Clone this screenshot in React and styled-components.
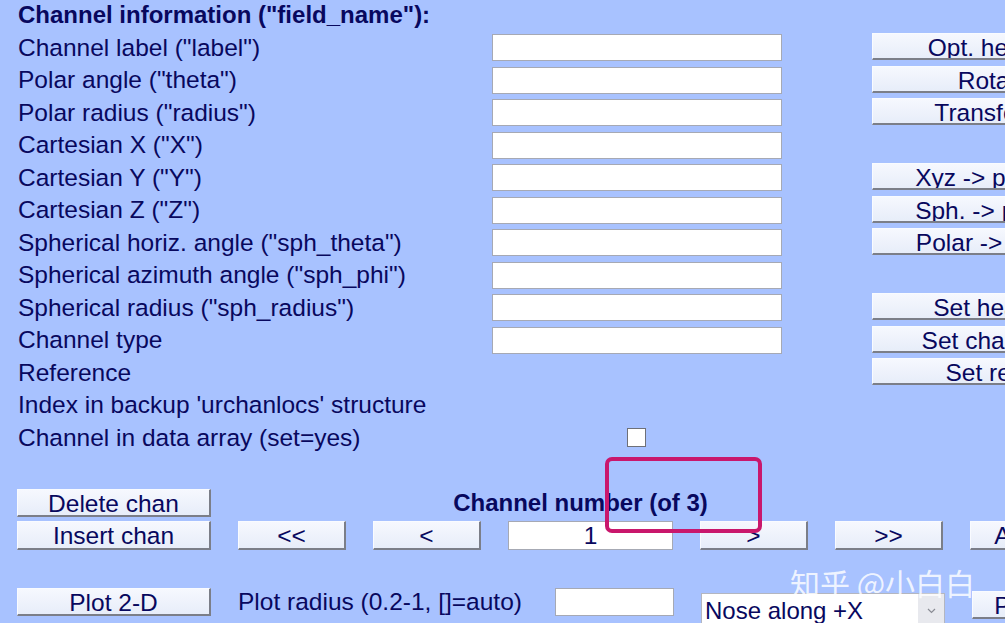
import styled, { createGlobalStyle } from "styled-components";

const GlobalStyle = createGlobalStyle`
  html, body {
    margin: 0;
    padding: 0;
    background: #a8c2ff;
    overflow: hidden;
  }
`;

const Page = styled.div`
  position: relative;
  width: 1005px;
  height: 623px;
  overflow: hidden;
  background: #a8c2ff;
  color: #08085e;
  font-family: "Liberation Sans", Arial, sans-serif;
  font-size: 24.5px;
`;

const Fields = styled.div`
  margin-top: -1px;
  padding-left: 18px;
  display: flex;
  flex-direction: column;
`;

const FieldRow = styled.div`
  display: grid;
  grid-template-columns: 474px 290px 90px 295px;
  height: 32.5px;
  align-items: center;
`;

const Label = styled.span`
  grid-column: 1;
  white-space: nowrap;
  font-weight: ${(p) => (p.$bold ? 700 : 400)};
  font-size: ${(p) => (p.$bold ? "24px" : "inherit")};
`;

const TextBox = styled.input`
  grid-column: 2;
  box-sizing: border-box;
  width: 100%;
  height: ${(p) => p.$h || 27}px;
  margin: 0;
  padding: 0 4px;
  border: 1px solid #a6a9b4;
  background: #fff;
  font: inherit;
  color: inherit;
  text-align: ${(p) => (p.$center ? "center" : "left")};
  outline: none;
`;

const Check = styled.input`
  grid-column: 2;
  justify-self: center;
  appearance: none;
  box-sizing: border-box;
  width: 19px;
  height: 19px;
  margin: 0 0 0 -1px;
  border: 1px solid #6e7078;
  background: #fff;
`;

const PushButton = styled.button`
  box-sizing: border-box;
  width: 100%;
  height: ${(p) => p.$h || 27}px;
  margin: 0;
  margin-top: ${(p) => p.$top || 0}px;
  padding: 0;
  font: inherit;
  color: inherit;
  text-align: center;
  white-space: nowrap;
  overflow: hidden;
  background: linear-gradient(#f6f8fe, #e7edf9);
  border-top: 1px solid #f9fbff;
  border-left: 1px solid #f9fbff;
  border-right: 2px solid #7b7e88;
  border-bottom: 2px solid #7b7e88;
`;

const SideCell = styled.div`
  grid-column: 4;
`;

const Nav = styled.div`
  margin-top: 35px;
  padding-left: 17px;
  display: grid;
  grid-template-columns: 194px 108px 108px 165px 108px 108px 194px;
  grid-template-rows: 28px 29px;
  column-gap: 27px;
  row-gap: 4px;
`;

const NavTitle = styled.div`
  grid-column: 3 / 6;
  grid-row: 1;
  align-self: end;
  padding-right: 20px;
  text-align: center;
  font-weight: 700;
  font-size: 24px;
  white-space: nowrap;
  line-height: 28px;
`;

const Bottom = styled.div`
  margin-top: 38px;
  padding-left: 17px;
  display: grid;
  grid-template-columns: 194px 290px 119px 244px 194px;
  column-gap: 27px;
  align-items: start;
`;

const InlineLabel = styled.span`
  white-space: nowrap;
  line-height: 28px;
`;

const Select = styled.div`
  box-sizing: border-box;
  margin-top: 5px;
  height: 36px;
  display: flex;
  align-items: center;
  background: #fff;
  border: 1px solid #b3b6c0;
`;

const SelectText = styled.span`
  flex: 1;
  padding-left: 3px;
  white-space: nowrap;
  font-size: 24px;
`;

const SelectArrow = styled.span`
  width: 26px;
  align-self: stretch;
  display: flex;
  align-items: center;
  justify-content: center;
  background: #e8e9ee;
`;

const Highlight = styled.div`
  position: absolute;
  left: 605px;
  top: 457px;
  width: 157px;
  height: 76px;
  box-sizing: border-box;
  border: 4px solid #c9176c;
  border-radius: 7px;
`;

const Watermark = styled.div`
  position: absolute;
  left: 790px;
  top: 560px;
  font-family: "Noto Sans CJK SC", sans-serif;
  font-size: 30px;
  color: rgba(255, 255, 255, 0.82);
  white-space: nowrap;
`;

const rows = [
  { label: 'Channel information ("field_name"):', bold: true },
  { label: 'Channel label ("label")', field: "text", side: "Opt. head center" },
  { label: 'Polar angle ("theta")', field: "text", side: "Rotate axis" },
  { label: 'Polar radius ("radius")', field: "text", side: "Transform axes" },
  { label: 'Cartesian X ("X")', field: "text" },
  { label: 'Cartesian Y ("Y")', field: "text", side: "Xyz -> polar & sph." },
  { label: 'Cartesian Z ("Z")', field: "text", side: "Sph. -> polar & xyz" },
  { label: 'Spherical horiz. angle ("sph_theta")', field: "text", side: "Polar -> sph. & xyz" },
  { label: 'Spherical azimuth angle ("sph_phi")', field: "text" },
  { label: 'Spherical radius ("sph_radius")', field: "text", side: "Set head radius" },
  { label: "Channel type", field: "text", side: "Set channel types" },
  { label: "Reference", side: "Set reference" },
  { label: "Index in backup 'urchanlocs' structure" },
  { label: "Channel in data array (set=yes)", field: "check" },
];

function App() {
  return (
    <Page>
      <GlobalStyle />
      <Fields>
        {rows.map((r) => (
          <FieldRow key={r.label}>
            <Label $bold={r.bold}>{r.label}</Label>
            {r.field === "text" && <TextBox type="text" defaultValue="" />}
            {r.field === "check" && <Check type="checkbox" />}
            {r.side && (
              <SideCell>
                <PushButton type="button">{r.side}</PushButton>
              </SideCell>
            )}
          </FieldRow>
        ))}
      </Fields>

      <Nav>
        <PushButton type="button" $h={28}>Delete chan</PushButton>
        <NavTitle>Channel number (of 3)</NavTitle>
        <div style={{ gridColumn: 1, gridRow: 2 }}>
          <PushButton type="button" $h={29}>Insert chan</PushButton>
        </div>
        <PushButton type="button" $h={29} style={{ gridRow: 2 }}>&lt;&lt;</PushButton>
        <PushButton type="button" $h={29} style={{ gridRow: 2 }}>&lt;</PushButton>
        <TextBox type="text" defaultValue="1" $h={29} $center style={{ gridRow: 2, gridColumn: 4 }} />
        <PushButton type="button" $h={29} style={{ gridRow: 2 }}>&gt;</PushButton>
        <PushButton type="button" $h={29} style={{ gridRow: 2 }}>&gt;&gt;</PushButton>
        <PushButton type="button" $h={29} style={{ gridRow: 2 }}>Append chan</PushButton>
      </Nav>

      <Bottom>
        <PushButton type="button" $h={28}>Plot 2-D</PushButton>
        <InlineLabel>Plot radius (0.2-1, []=auto)</InlineLabel>
        <TextBox type="text" defaultValue="" $h={28} style={{ gridColumn: 3 }} />
        <Select>
          <SelectText>Nose along +X</SelectText>
          <SelectArrow>
            <svg width="9" height="6" viewBox="0 0 9 6">
              <path d="M1 1 L4.5 4.5 L8 1" fill="none" stroke="#8a8c94" strokeWidth="1.2" />
            </svg>
          </SelectArrow>
        </Select>
        <PushButton type="button" $h={28} $top={3}>Plot 3-D (xyz)</PushButton>
      </Bottom>

      <Highlight />
      <Watermark>知乎 @小白白</Watermark>
    </Page>
  );
}

export default App;
